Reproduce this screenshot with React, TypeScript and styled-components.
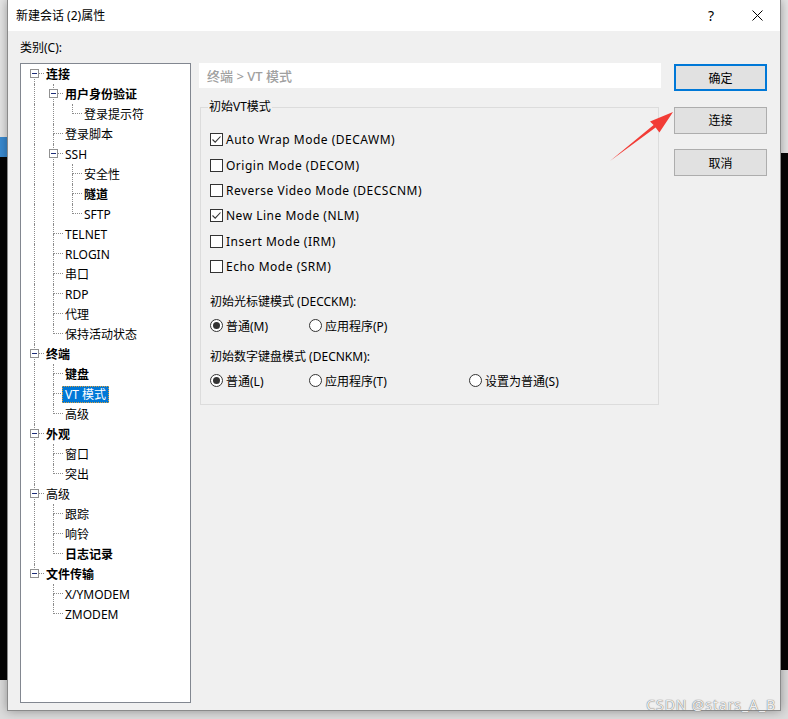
import React from 'react';
import styled, { createGlobalStyle, css } from 'styled-components';

const GlobalStyle = createGlobalStyle`
  html, body { margin: 0; padding: 0; }
  body {
    width: 788px; height: 719px; overflow: hidden;
    background: #e2e2e2;
    font-family: "Noto Sans", "Noto Sans CJK SC", sans-serif;
    font-size: 12px; color: #000;
  }
  * { box-sizing: border-box; }
`;

const FONT = `"Noto Sans", "Noto Sans CJK SC", sans-serif`;

const Screen = styled.div`
  position: relative;
  width: 788px; height: 719px;
  display: grid;
  grid-template-columns: 7px 774px 7px;
  grid-template-rows: 711px 8px;
`;

const Strip = styled.div<{ $col: number }>`
  grid-column: ${p => p.$col};
  grid-row: 1 / span 2;
  display: flex; flex-direction: column;
`;

const StripBlock = styled.div<{ $h: number; $bg: string }>`
  flex: 0 0 ${p => p.$h}px;
  background: ${p => p.$bg};
`;

const StripRest = styled.div<{ $bg: string }>`
  flex: 1; background: ${p => p.$bg};
`;

const BottomStrip = styled.div`
  grid-column: 2; grid-row: 2;
  background: #dcdcdc;
`;

const Dialog = styled.div`
  grid-column: 2; grid-row: 1;
  display: flex; flex-direction: column;
  border: 1px solid #8a8a8a;
  border-top: none;
  background: #f0f0f0;
  box-shadow: 0 0 10px rgba(0,0,0,0.35);
  z-index: 1;
`;

const TitleBar = styled.div`
  height: 31px; flex: 0 0 31px;
  background: #fff;
  display: flex; align-items: center;
  padding-left: 8px;
`;

const TitleText = styled.div`
  flex: 1;
  font-size: 12px;
  line-height: 16px;
`;

const CaptionButton = styled.div`
  width: 46px; height: 31px;
  display: flex; align-items: center; justify-content: center;
  font-size: 14px; color: #000;
`;

const Body = styled.div`
  flex: 1;
  padding: 9px 12px 0 12px;
  display: flex; flex-direction: column;
`;

const CategoryLabel = styled.div`
  line-height: 16px; height: 16px;
  margin-bottom: 7px;
`;

const Content = styled.div`
  display: flex; align-items: flex-start;
`;

const TreeBox = styled.div`
  width: 171px; height: 640px;
  border: 1px solid #828790;
  background: #fff;
  padding-left: 6px;
  display: flex; flex-direction: column;
`;

const TreeRow = styled.div`
  display: flex; height: 20px; align-items: stretch;
`;

const dotV = css`border-right: 1px dotted #8c8c8c;`;

const GuideCol = styled.div`
  width: 19px; flex: 0 0 19px;
  display: flex;
`;

const GuideLine = styled.div<{ $line: boolean }>`
  width: 8px; height: 20px;
  ${p => p.$line && dotV}
`;

const NodeCell = styled.div`
  position: relative;
  width: 19px; flex: 0 0 19px;
  display: grid;
  grid-template-columns: 8px 9px;
  grid-template-rows: 10px 10px;
`;

const HalfV = styled.div<{ $line: boolean }>`
  ${p => p.$line && dotV}
`;

const HLine = styled.div`
  border-bottom: 1px dotted #8c8c8c;
`;

const Expander = styled.div`
  position: absolute;
  left: 3px; top: 5px;
  width: 9px; height: 9px;
  border: 1px solid #919191;
  background: #fff;
  display: flex; align-items: center; justify-content: center;
`;

const Minus = styled.div`
  width: 5px; height: 1px; background: #1e2d78;
`;

const TreeLabel = styled.div<{ $bold?: boolean; $selected?: boolean }>`
  align-self: center;
  height: 17px; line-height: 15px;
  margin-left: -3px;
  padding: 0 2px;
  white-space: nowrap;
  font-weight: ${p => (p.$bold ? 700 : 400)};
  border: 1px solid transparent;
  ${p => p.$selected && css`
    background: #0078d7;
    color: #fff;
    border: 1px dotted #d9a040;
  `}
`;

const Panel = styled.div`
  width: 462px;
  margin-left: 8px;
  display: flex; flex-direction: column;
`;

const Breadcrumb = styled.div`
  height: 25px;
  background: #fff;
  padding-left: 8px;
  display: flex; align-items: center;
  font-size: 13px;
  font-weight: 500;
  color: #a0a0a0;
`;

const Group = styled.fieldset`
  margin: 11px 0 0 1px;
  width: 459px;
  border: 1px solid #dcdcdc;
  padding: 12px 0 11px 9px;
  min-width: 0;
`;

const Legend = styled.legend`
  padding: 0 1px;
  margin-left: -2px;
  line-height: 16px;
`;

const OptRow = styled.div<{ $h?: number; $mt?: number }>`
  height: ${p => p.$h ?? 25}px;
  margin-top: ${p => p.$mt ?? 0}px;
  display: flex; align-items: center;
`;

const RadioGrid = styled.div`
  height: 25px;
  display: grid;
  grid-template-columns: 99px 160px auto;
  align-items: center;
`;

const Choice = styled.div`
  display: flex; align-items: center;
  white-space: nowrap;
`;

const LatinText = styled.span`
  letter-spacing: 0.5px;
`;

const CheckBox = styled.div`
  width: 13px; height: 13px; flex: 0 0 13px;
  border: 1px solid #333;
  background: #fff;
  margin-right: 3px;
  display: flex; align-items: center; justify-content: center;
`;

const RadioOuter = styled.div`
  width: 13px; height: 13px; flex: 0 0 13px;
  border: 1px solid #333;
  border-radius: 50%;
  background: #fff;
  margin-right: 3px;
  display: flex; align-items: center; justify-content: center;
`;

const RadioDot = styled.div`
  width: 7px; height: 7px; border-radius: 50%; background: #333;
`;

const Buttons = styled.div`
  margin-left: 13px;
  margin-top: 1px;
  display: flex; flex-direction: column;
  gap: 15.5px;
`;

const Btn = styled.div<{ $default?: boolean }>`
  width: 93px; height: 27px;
  background: #e1e1e1;
  border: 1px solid #adadad;
  display: flex; align-items: center; justify-content: center;
  ${p => p.$default && css`border: 2px solid #0078d7;`}
`;

const ArrowLayer = styled.svg`
  position: absolute;
  left: 0; top: 0;
  width: 788px; height: 719px;
  pointer-events: none;
  z-index: 5;
`;

const Watermark = styled.div`
  position: absolute;
  right: 12px; top: 695px;
  font-family: ${FONT};
  font-size: 14px;
  letter-spacing: 0.9px;
  color: rgba(255,255,255,0.9);
  text-shadow: 0 0 1px #777, 0 0 1px #777;
  z-index: 6;
`;

type TNode = { label: string; bold?: boolean; selected?: boolean; children?: TNode[] };

const tree: TNode[] = [
  {
    label: '连接', bold: true, children: [
      { label: '用户身份验证', bold: true, children: [{ label: '登录提示符' }] },
      { label: '登录脚本' },
      { label: 'SSH', children: [{ label: '安全性' }, { label: '隧道', bold: true }, { label: 'SFTP' }] },
      { label: 'TELNET' },
      { label: 'RLOGIN' },
      { label: '串口' },
      { label: 'RDP' },
      { label: '代理' },
      { label: '保持活动状态' },
    ],
  },
  {
    label: '终端', bold: true, children: [
      { label: '键盘', bold: true },
      { label: 'VT 模式', selected: true },
      { label: '高级' },
    ],
  },
  { label: '外观', bold: true, children: [{ label: '窗口' }, { label: '突出' }] },
  { label: '高级', children: [{ label: '跟踪' }, { label: '响铃' }, { label: '日志记录', bold: true }] },
  { label: '文件传输', bold: true, children: [{ label: 'X/YMODEM' }, { label: 'ZMODEM' }] },
];

type Flat = { node: TNode; level: number; guides: boolean[]; top: boolean; bottom: boolean };

function flatten(nodes: TNode[], level: number, guides: boolean[], out: Flat[]) {
  nodes.forEach((n, i) => {
    const last = i === nodes.length - 1;
    const top = level === 0 ? i !== 0 : true;
    out.push({ node: n, level, guides, top, bottom: !last });
    if (n.children) flatten(n.children, level + 1, [...guides, !last], out);
  });
  return out;
}

const rows = flatten(tree, 0, [], []);

const Tree: React.FC = () => (
  <TreeBox>
    {rows.map((r, idx) => (
      <TreeRow key={idx}>
        {r.guides.map((g, gi) => (
          <GuideCol key={gi}>
            <GuideLine $line={g} />
          </GuideCol>
        ))}
        <NodeCell>
          <HalfV $line={r.top} />
          <HLine />
          <HalfV $line={r.bottom} />
          <div />
          {r.node.children && (
            <Expander>
              <Minus />
            </Expander>
          )}
        </NodeCell>
        <TreeLabel $bold={r.node.bold} $selected={r.node.selected}>{r.node.label}</TreeLabel>
      </TreeRow>
    ))}
  </TreeBox>
);

const Check: React.FC<{ checked?: boolean; label: string }> = ({ checked, label }) => (
  <Choice>
    <CheckBox>
      {checked && (
        <svg width="11" height="11" viewBox="0 0 11 11">
          <path d="M1.5 5.5 L4.2 8.2 L9.5 2.5" fill="none" stroke="#333" strokeWidth="1.1" />
        </svg>
      )}
    </CheckBox>
    <LatinText>{label}</LatinText>
  </Choice>
);

const Radio: React.FC<{ checked?: boolean; label: string }> = ({ checked, label }) => (
  <Choice>
    <RadioOuter>{checked && <RadioDot />}</RadioOuter>
    {label}
  </Choice>
);

const checks: [string, boolean][] = [
  ['Auto Wrap Mode (DECAWM)', true],
  ['Origin Mode (DECOM)', false],
  ['Reverse Video Mode (DECSCNM)', false],
  ['New Line Mode (NLM)', true],
  ['Insert Mode (IRM)', false],
  ['Echo Mode (SRM)', false],
];

export default function App() {
  return (
    <>
      <GlobalStyle />
      <Screen>
        <Strip $col={1}>
          <StripBlock $h={137} $bg="#e6e6e6" />
          <StripBlock $h={20} $bg="#3a8bd1" />
          <StripBlock $h={523} $bg="#050505" />
          <StripRest $bg="#dcdcdc" />
        </Strip>
        <Dialog>
          <TitleBar>
            <TitleText>新建会话 (2)属性</TitleText>
            <CaptionButton>?</CaptionButton>
            <CaptionButton>
              <svg width="11" height="11" viewBox="0 0 11 11">
                <path d="M0.5 0.5 L10.5 10.5 M10.5 0.5 L0.5 10.5" stroke="#000" strokeWidth="1" />
              </svg>
            </CaptionButton>
          </TitleBar>
          <Body>
            <CategoryLabel>类别(C):</CategoryLabel>
            <Content>
              <Tree />
              <Panel>
                <Breadcrumb>终端 &gt; VT 模式</Breadcrumb>
                <Group>
                  <Legend>初始VT模式</Legend>
                  {checks.map(([l, c]) => (
                    <OptRow key={l} $h={25.4}>
                      <Check label={l} checked={c} />
                    </OptRow>
                  ))}
                  <OptRow $mt={9}>初始光标键模式 (DECCKM):</OptRow>
                  <RadioGrid>
                    <Radio checked label="普通(M)" />
                    <Radio label="应用程序(P)" />
                  </RadioGrid>
                  <OptRow $mt={5}>初始数字键盘模式 (DECNKM):</OptRow>
                  <RadioGrid>
                    <Radio checked label="普通(L)" />
                    <Radio label="应用程序(T)" />
                    <Radio label="设置为普通(S)" />
                  </RadioGrid>
                </Group>
              </Panel>
              <Buttons>
                <Btn $default>确定</Btn>
                <Btn>连接</Btn>
                <Btn>取消</Btn>
              </Buttons>
            </Content>
          </Body>
        </Dialog>
        <Strip $col={3}>
          <StripBlock $h={153} $bg="#e6e6e6" />
          <StripBlock $h={517} $bg="#050505" />
          <StripRest $bg="#dcdcdc" />
        </Strip>
        <BottomStrip />
        <ArrowLayer viewBox="0 0 788 719">
          <polygon
            points="610,161 655.6,127.6 659.4,132.6 673,112 650,121.4 653.6,124.9"
            fill="#f23c36"
          />
        </ArrowLayer>
        <Watermark>CSDN @stars_A_B</Watermark>
      </Screen>
    </>
  );
}
